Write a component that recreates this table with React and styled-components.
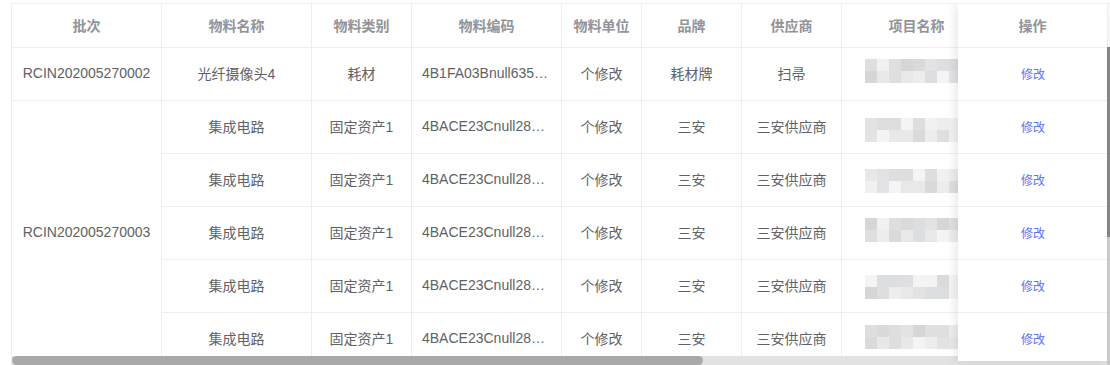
import React from "react";
import styled, { createGlobalStyle } from "styled-components";

const GlobalStyle = createGlobalStyle`
  html, body {
    margin: 0;
    padding: 0;
    background: #ffffff;
  }
  body {
    font-family: "Liberation Sans", "Noto Sans CJK SC", sans-serif;
  }
`;

const Page = styled.div`
  padding: 3px 0 0 11px;
  width: 1110px;
  height: 365px;
  box-sizing: border-box;
  overflow: hidden;
`;

const TableBox = styled.div`
  position: relative;
  width: 1099px;
  height: 362px;
  overflow: hidden;
  border-top: 1px solid #ebeef5;
  border-left: 1px solid #ebeef5;
  box-sizing: border-box;
`;

const Grid = styled.div`
  display: grid;
  grid-template-columns: 150px 150px 100px 150px 80px 100px 100px 150px 150px;
  grid-template-rows: 44px repeat(6, 53px);
  width: 1130px;
`;

const Cell = styled.div`
  box-sizing: border-box;
  border-right: 1px solid #ebeef5;
  border-bottom: 1px solid #ebeef5;
  padding: 0 10px 2px;
  display: flex;
  align-items: center;
  justify-content: center;
  min-width: 0;
  font-size: 14px;
  color: ${(p) => (p.$head ? "#909399" : "#606266")};
  font-weight: ${(p) => (p.$head ? 700 : 400)};
  grid-row: ${(p) => (p.$span ? `span ${p.$span}` : "auto")};
  position: relative;
`;

const Clip = styled.span`
  display: block;
  width: 100%;
  white-space: nowrap;
  overflow: hidden;
  text-overflow: ellipsis;
  text-align: center;
`;

const MosaicBox = styled.div`
  position: absolute;
  left: 23px;
  top: ${(p) => p.$top}px;
  opacity: 0.85;
`;

const FixedCol = styled.div`
  position: absolute;
  top: 0;
  right: 2px;
  width: 150px;
  height: 357px;
  background: #ffffff;
  box-shadow: -2px 0 10px rgba(0, 0, 0, 0.1);
  z-index: 3;
  display: flex;
  flex-direction: column;
`;

const FixedCell = styled.div`
  box-sizing: border-box;
  flex: 0 0 ${(p) => (p.$head ? 44 : 53)}px;
  padding-bottom: 2px;
  border-bottom: 1px solid #ebeef5;
  border-right: ${(p) => (p.$head ? "1px solid #ebeef5" : "none")};
  display: flex;
  align-items: center;
  justify-content: center;
  font-size: 14px;
  font-weight: ${(p) => (p.$head ? 700 : 400)};
  color: #909399;
`;

const EditLink = styled.span`
  font-size: 12px;
  color: #5a72f6;
  cursor: pointer;
`;

const HTrack = styled.div`
  position: absolute;
  left: 0;
  right: 3px;
  bottom: 0;
  height: 9px;
  background: #e2e2e2;
  z-index: 2;
`;

const HThumb = styled.div`
  width: 691px;
  height: 9px;
  border-radius: 5px;
  background: #a9a9a9;
`;

const VTrack = styled.div`
  position: absolute;
  right: 0;
  top: 43px;
  bottom: 0;
  width: 3px;
  background: #c9c9c9;
  z-index: 4;
`;

const VThumb = styled.div`
  height: 190px;
  background: #858585;
`;

const shades = ["#d4d4d4", "#dadadc", "#dfdfe1", "#e5e5e5", "#eaeaeb", "#efefef", "#cfcfd1", "#f3f3f3", "#d8d9db"];

const Mosaic = ({ seed }) => {
  const rects = [];
  let s = seed * 37 + 11;
  for (let r = 0; r < 2; r++) {
    for (let c = 0; c < 8; c++) {
      s = (s * 73 + 29) % 101;
      rects.push(
        <rect
          key={`${r}-${c}`}
          x={c * 12}
          y={r * 12}
          width={12}
          height={12}
          fill={shades[s % shades.length]}
        />
      );
    }
  }
  return (
    <svg width="96" height="24" viewBox="0 0 96 24">
      {rects}
    </svg>
  );
};

const rows = [
  { batch: "RCIN202005270002", name: "光纤摄像头4", cat: "耗材", code: "4B1FA03Bnull6358E2A", unit: "个修改", brand: "耗材牌", supplier: "扫帚", top: 11 },
  { name: "集成电路", cat: "固定资产1", code: "4BACE23Cnull28F01B", unit: "个修改", brand: "三安", supplier: "三安供应商", top: 17 },
  { name: "集成电路", cat: "固定资产1", code: "4BACE23Cnull28F01C", unit: "个修改", brand: "三安", supplier: "三安供应商", top: 15 },
  { name: "集成电路", cat: "固定资产1", code: "4BACE23Cnull28F01D", unit: "个修改", brand: "三安", supplier: "三安供应商", top: 11 },
  { name: "集成电路", cat: "固定资产1", code: "4BACE23Cnull28F01E", unit: "个修改", brand: "三安", supplier: "三安供应商", top: 15 },
  { name: "集成电路", cat: "固定资产1", code: "4BACE23Cnull28F01F", unit: "个修改", brand: "三安", supplier: "三安供应商", top: 12 },
];

const headers = ["批次", "物料名称", "物料类别", "物料编码", "物料单位", "品牌", "供应商", "项目名称", "操作"];

export default function App() {
  return (
    <>
      <GlobalStyle />
      <Page>
        <TableBox>
          <Grid>
            {headers.map((h) => (
              <Cell key={h} $head>
                {h}
              </Cell>
            ))}
            {rows.map((r, i) => (
              <React.Fragment key={i}>
                {i === 0 && <Cell>{r.batch}</Cell>}
                {i === 1 && <Cell $span={5}>RCIN202005270003</Cell>}
                <Cell>{r.name}</Cell>
                <Cell>{r.cat}</Cell>
                <Cell>
                  <Clip>{r.code}</Clip>
                </Cell>
                <Cell>{r.unit}</Cell>
                <Cell>{r.brand}</Cell>
                <Cell>{r.supplier}</Cell>
                <Cell>
                  <MosaicBox $top={r.top}>
                    <Mosaic seed={i + 2} />
                  </MosaicBox>
                </Cell>
                <Cell />
              </React.Fragment>
            ))}
          </Grid>

          <FixedCol>
            <FixedCell $head>操作</FixedCell>
            {rows.map((r, i) => (
              <FixedCell key={i}>
                <EditLink>修改</EditLink>
              </FixedCell>
            ))}
          </FixedCol>

          <HTrack>
            <HThumb />
          </HTrack>
          <VTrack>
            <VThumb />
          </VTrack>
        </TableBox>
      </Page>
    </>
  );
}
